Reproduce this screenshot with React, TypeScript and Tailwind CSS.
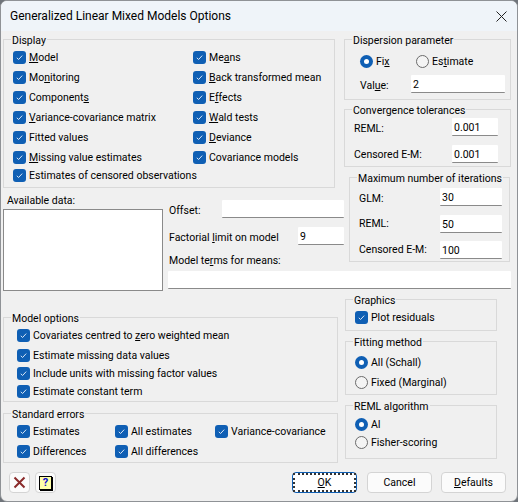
import React from "react";

const FONT = "font-['Roboto','Liberation_Sans',sans-serif]";

function Check({ children, className = "" }: { children: React.ReactNode; className?: string }) {
  return (
    <div className={"flex items-center h-[14px] " + className}>
      <span className="w-[13px] h-[13px] rounded-[3px] bg-[#0f5fb4] flex items-center justify-center shrink-0">
        <svg width="9" height="9" viewBox="0 0 9 9" fill="none">
          <path d="M1.8 4.8 L3.6 6.5 L7.2 2.6" stroke="#d8e6f5" strokeWidth="1" />
        </svg>
      </span>
      <span className="ml-[3px] pt-[1px] whitespace-nowrap leading-[14px]">{children}</span>
    </div>
  );
}

function Radio({ on, children, className = "" }: { on?: boolean; children: React.ReactNode; className?: string }) {
  return (
    <div className={"flex items-center h-[14px] " + className}>
      {on ? (
        <span className="w-[13px] h-[13px] rounded-full bg-[#0f5fb4] flex items-center justify-center shrink-0">
          <span className="w-[5px] h-[5px] rounded-full bg-white" />
        </span>
      ) : (
        <span className="w-[13px] h-[13px] rounded-full border border-[#6b6b6b] bg-[#f4f4f4] shrink-0" />
      )}
      <span className="ml-[3px] pt-[1px] whitespace-nowrap leading-[14px]">{children}</span>
    </div>
  );
}

function Group({ title, className = "", children }: { title: string; className?: string; children: React.ReactNode }) {
  return (
    <div className={"relative border border-[#d9d9d9] " + className}>
      <span className="absolute left-[7px] top-[-6px] bg-[#f0f0f0] px-[1px] leading-[14px] whitespace-nowrap">{title}</span>
      {children}
    </div>
  );
}

function Input({ value = "", className = "" }: { value?: string; className?: string }) {
  return (
    <div className={"h-[18px] bg-white border-b border-[#8a8a8a] rounded-[1px] pl-[2px] pt-[1px] leading-[17px] " + className}>{value}</div>
  );
}

function Btn({ children, className = "" }: { children: React.ReactNode; className?: string }) {
  return (
    <div className={"h-[21px] bg-[#fbfbfb] border border-[#d4d4d4] rounded-[4px] flex items-center justify-center " + className}>
      {children}
    </div>
  );
}

export default function App() {
  return (
    <div className={"w-[518px] h-[502px] bg-[#6f747a] text-[10.5px] text-black " + FONT}>
      <div className="w-full h-full rounded-[7px] overflow-hidden bg-[#f0f0f0] flex flex-col border border-[#8f9296]">
        <div className="h-[30px] shrink-0 bg-[#eff4f9] flex items-center justify-between pl-[9px] pr-[10px]">
          <span className="text-[12px]">Generalized Linear Mixed Models Options</span>
          <svg width="11" height="11" viewBox="0 0 11 11" fill="none">
            <path d="M0.5 0.5 L10.5 10.5 M10.5 0.5 L0.5 10.5" stroke="#222" strokeWidth="1" />
          </svg>
        </div>

        <div className="grid grid-cols-[165px_176px_167px] pl-[2px] mt-[8px]">
          <Group title="Display" className="col-span-2 w-[332px] h-[149px] pl-[9px] pt-[10px]">
            <div className="grid grid-cols-[180px_1fr] gap-y-[6px]">
              <Check><u>M</u>odel</Check>
              <Check>Me<u>a</u>ns</Check>
              <Check>Mo<u>n</u>itoring</Check>
              <Check><u>B</u>ack transformed mean</Check>
              <Check>Component<u>s</u></Check>
              <Check>E<u>f</u>fects</Check>
              <Check><u>V</u>ariance-covariance matrix</Check>
              <Check><u>W</u>ald tests</Check>
              <Check>Fitted values</Check>
              <Check><u>D</u>eviance</Check>
              <Check><u>M</u>issing value estimates</Check>
              <Check>Covariance models</Check>
              <Check className="col-span-2 mt-[-2px]">Estimates of censored observations</Check>
            </div>
          </Group>

          <div className="row-span-2 flex flex-col">
            <Group title="Dispersion parameter" className="w-[167px] h-[61px]">
              <div className="flex pl-[15px] pt-[14px]">
                <Radio on className="w-[56px]">Fi<u>x</u></Radio>
                <Radio>Es<u>t</u>imate</Radio>
              </div>
              <div className="flex items-center pl-[15px] mt-[7px]">
                <span className="w-[51px] pt-[3px]">Val<u>u</u>e:</span>
                <Input value="2" className="w-[94px]" />
              </div>
            </Group>
            <Group title="Convergence tolerances" className="w-[167px] h-[58px] mt-[9px]">
              <div className="flex items-center justify-between pl-[9px] pr-[12px] pt-[8px]">
                <span className="pt-[3px]">REML:</span>
                <Input value="0.001" className="w-[46px]" />
              </div>
              <div className="flex items-center justify-between pl-[9px] pr-[12px] mt-[8px]">
                <span className="pt-[2px]">Censored E-M:</span>
                <Input value="0.001" className="w-[46px]" />
              </div>
            </Group>
            <Group title="Maximum number of iterations" className="w-[161px] ml-[5px] h-[85px] mt-[10px]">
              <div className="flex flex-col gap-[8px] pl-[9px] pr-[7px] pt-[10px]">
                <div className="flex items-center justify-between"><span className="pt-[3px]">GLM:</span><Input value="30" className="w-[62px]" /></div>
                <div className="flex items-center justify-between"><span>REML:</span><Input value="50" className="w-[62px]" /></div>
                <div className="flex items-center justify-between"><span className="pt-[1px]">Censored E-M:</span><Input value="100" className="w-[62px]" /></div>
              </div>
            </Group>
          </div>

          <div className="row-span-2 pt-[6px]">
            <div className="leading-[14px] pl-[4px]">Available data:</div>
            <div className="w-[160px] h-[82px] mt-[1px] bg-white border border-[#8a8a8a]" />
          </div>
          <div className="pt-[12px] pl-[1px]">
            <div className="flex items-center justify-between">
              <span className="pt-[3px]">Offset:</span>
              <Input className="w-[122px]" />
            </div>
            <div className="flex items-center justify-between mt-[8px]">
              <span className="pt-[3px]">Factorial <u>l</u>imit on model</span>
              <Input value="9" className="w-[46px]" />
            </div>
            <div className="leading-[14px] mt-[8px] h-[13px]">Model te<u>r</u>ms for means:</div>
          </div>
          <div className="col-span-2 pt-[3px]">
            <Input className="w-[343px]" />
          </div>
        </div>

        <div className="flex pl-[2px] mt-[8px]">
          <div className="w-[342px]">
            <Group title="Model options" className="w-[335px] h-[85px] mt-[18px]">
              <div className="flex flex-col pl-[13px] pt-[10px]">
                <Check>Covariates centred to <u>z</u>ero weighted mean</Check>
                <Check className="mt-[6px]">Estimate missing data values</Check>
                <Check className="mt-[4px]">Include units with missing factor values</Check>
                <Check className="mt-[4px]">Estimate constant term</Check>
              </div>
            </Group>
            <Group title="Standard errors" className="w-[335px] h-[50px] mt-[11px]">
              <div className="grid grid-cols-[98px_100px_1fr] gap-y-[6px] pl-[13px] pt-[10px]">
                <Check>Estimates</Check>
                <Check>All estimates</Check>
                <Check>Variance-covariance</Check>
                <Check>Differences</Check>
                <Check>All differences</Check>
              </div>
            </Group>
          </div>
          <div className="flex flex-col">
            <Group title="Graphics" className="w-[152px] h-[32px]">
              <Check className="pl-[9px] pt-[10px] box-content">Plot residuals</Check>
            </Group>
            <Group title="Fitting method" className="w-[152px] h-[54px] mt-[10px]">
              <div className="flex flex-col gap-[6px] pl-[9px] pt-[13px]">
                <Radio on>All (Schall)</Radio>
                <Radio>Fixed (Mar<u>g</u>inal)</Radio>
              </div>
            </Group>
            <Group title="REML algorithm" className="w-[152px] h-[54px] mt-[10px]">
              <div className="flex flex-col gap-[4px] pl-[9px] pt-[11px]">
                <Radio on>AI</Radio>
                <Radio>Fisher-scoring</Radio>
              </div>
            </Group>
          </div>
        </div>

        <div className="flex items-center pl-[8px] mt-[9px]">
          <Btn className="w-[21px]">
            <svg width="13" height="13" viewBox="0 0 13 13" fill="none">
              <path d="M1.5 1.5 L11.5 11.5 M11.5 1.5 L1.5 11.5" stroke="#8a2a2a" strokeWidth="2" />
            </svg>
          </Btn>
          <Btn className="w-[21px] ml-[5px]">
            <span className="w-[13px] h-[14px] bg-[#ffffa8] border border-black shadow-[1px_1px_0_#000] flex items-center justify-center text-[#1010d0] font-bold text-[11px] leading-none">?</span>
          </Btn>
          <div className="h-[21px] w-[65px] ml-[236px] bg-white border border-[#0f5fb4] rounded-[4px]">
            <div className="w-full h-full border-2 border-dotted border-[#333] flex items-center justify-center"><span><u>O</u>K</span></div>
          </div>
          <Btn className="w-[65px] ml-[10px]">Cancel</Btn>
          <Btn className="w-[65px] ml-[9px]"><span><u>D</u>efaults</span></Btn>
        </div>
      </div>
    </div>
  );
}
